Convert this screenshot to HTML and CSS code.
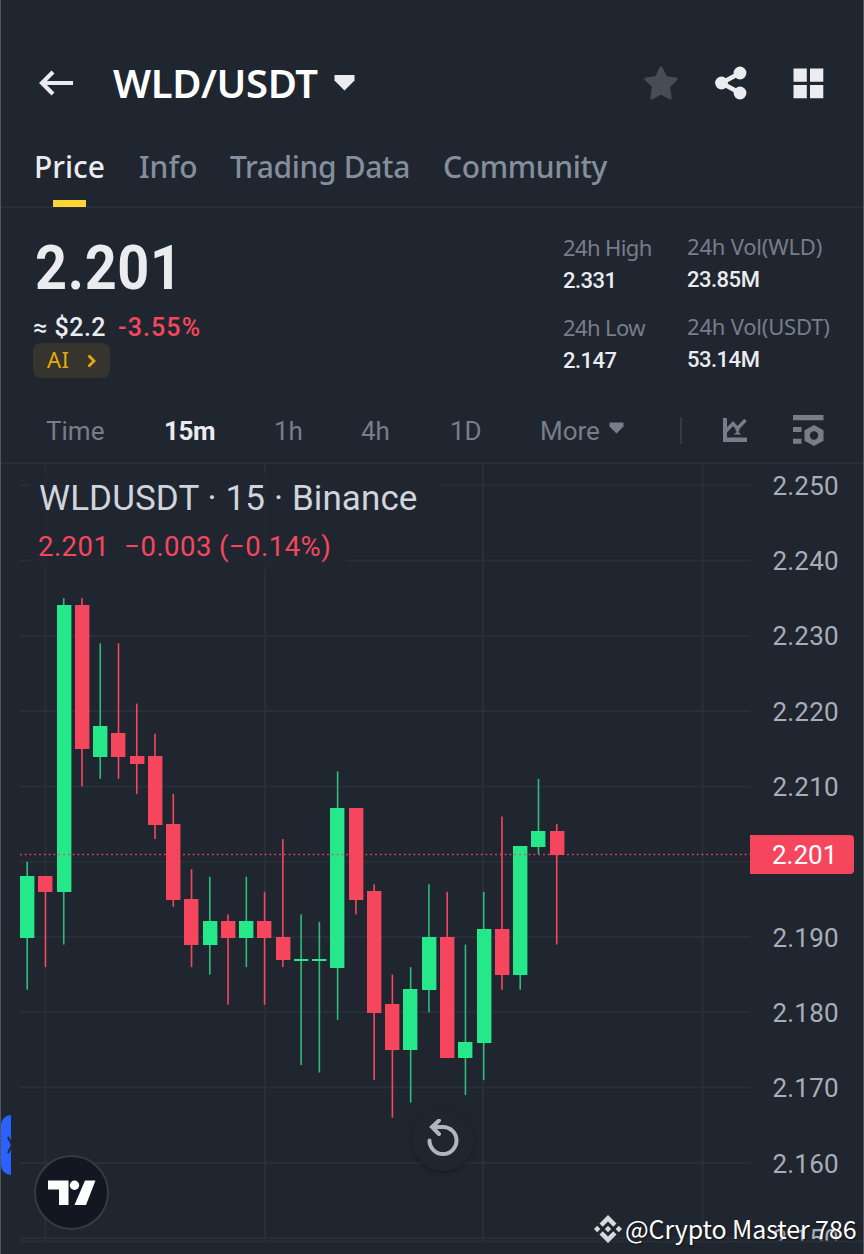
FILE: index.html
```html
<!DOCTYPE html>
<html lang="en">
<head>
    <meta charset="UTF-8">
    <meta name="viewport" content="width=device-width, initial-scale=1.0">
    <title>WLD/USDT</title>
    <link rel="stylesheet" href="styles.css">
</head>
<body>
<div class="screen">
    <header class="header">
        <svg class="back" width="36" height="28" viewBox="0 0 36 28"><path d="M35 14H4M15 3L4 14l11 11" fill="none" stroke="#eaecef" stroke-width="4.2"/></svg>
        <h1><span>WLD/USDT</span></h1>
        <svg class="caret" width="21" height="16" viewBox="0 0 21 16"><path d="M.5 0h20v5.500L10.500 15.500.5 5.500z" fill="#eaecef"/></svg>
        <div class="actions">
            <svg width="34" height="34" viewBox="0 0 34 34"><path d="M17 2l4.600 9.500 10.400 1.500-7.500 7.400 1.700 11.600L17 27l-9.200 5 1.700-11.600L2 13l10.400-1.500z" fill="#474d57" stroke="#474d57" stroke-width="3" stroke-linejoin="round"/></svg>
            <svg width="32" height="34" viewBox="0 0 32 34"><path d="M25 7L6.500 17 25 27" fill="none" stroke="#eaecef" stroke-width="4.500"/><g fill="#eaecef"><circle cx="6.500" cy="17" r="6.400"/><circle cx="25" cy="7" r="6.400"/><circle cx="25" cy="27" r="6.400"/></g></svg>
            <svg width="31" height="31" viewBox="0 0 31 31"><path d="M.5.5h13.300v13.300H.5zM17 .5h13.300v13.300H17zM.5 17h13.300v13.300H.5zM17 17h13.300v13.300H17z" fill="#eaecef"/></svg>
        </div>
    </header>

    <nav class="tabs">
        <a class="active">Price</a>
        <a>Info</a>
        <a class="tight">Trading Data</a>
        <a class="tight">Community</a>
    </nav>

    <section class="summary">
        <div class="price">
            <div class="last"><span>2.201</span></div>
            <div class="fiat"><span class="usd">≈ $2.2</span><span class="down">-3.55%</span></div>
            <div class="ai"><span>AI</span><svg width="9" height="14" viewBox="0 0 9 14"><path d="M1.500 1.500L7 7l-5.500 5.500" fill="none" stroke="#e0aa12" stroke-width="2.800"/></svg></div>
        </div>
        <dl class="stats">
            <div><dt class="tight">24h High</dt><dd>2.331</dd></div>
            <div class="vol"><dt>24h Vol(WLD)</dt><dd>23.85M</dd></div>
            <div><dt class="tight">24h Low</dt><dd>2.147</dd></div>
            <div class="vol"><dt>24h Vol(USDT)</dt><dd>53.14M</dd></div>
        </dl>
    </section>

    <nav class="intervals">
        <a>Time</a>
        <a class="active">15m</a>
        <a>1h</a>
        <a>4h</a>
        <a>1D</a>
        <a class="more">More <svg width="15" height="12" viewBox="0 0 15 12"><path d="M.5.500h14v4L7.500 11.500.5 4.500z" fill="#777d89"/></svg></a>
        <i class="divider"></i>
        <svg width="25" height="25" viewBox="0 0 25 25"><path d="M0 0h4v19.500h20V24H0z" fill="#777d89"/><path d="M3 13l7-7.500 4.500 5L22.500 2" fill="none" stroke="#777d89" stroke-width="3.400"/><path d="M12 11.500h5l-1.700 2.500 3 2.500h-7.600l3-2.500z" fill="#777d89"/></svg>
        <svg width="31" height="32" viewBox="0 0 31 32"><path d="M0 0h30.500v5.300H0zM0 12h8.500v5H0zM0 23.700h8.500v5H0z" fill="#777d89"/><path fill-rule="evenodd" d="M21 10l9.500 5.300v10.400L21 31l-9.500-5.300V15.300zM21 16.300a4.200 4.200 0 100 8.400 4.200 4.200 0 000-8.400z" fill="#777d89"/></svg>
    </nav>

    <main class="chart">
        <svg id="plot" width="862" height="790" viewBox="1 464 862 790"></svg>
        <div class="legend">
            <div class="symbol"><span>WLDUSDT · 15 · Binance</span></div>
            <div class="change"><span>2.201</span><span>−0.003 (−0.14%)</span></div>
        </div>
        <div class="price-tag">2.201</div>
        <div class="drawer"><svg width="5" height="18" viewBox="0 0 5 18"><path d="M1 1l4 8-4 8" fill="none" stroke="#202630" stroke-width="2"/></svg></div>
        <div class="tv-logo">
            <svg width="48" height="26" viewBox="0 0 48 26"><path d="M0 .5h20.500V25h-9.500V9.500H0zM37 .5h10.500L38 25H26.500z" fill="#fff"/><circle cx="26.500" cy="5.200" r="4.700" fill="#fff"/></svg>
        </div>
        <button class="reset"><svg width="36" height="40" viewBox="0 0 36 40"><path d="M4.500 21.500A13.500 13.500 0 1018 8H7M14 1.500L7 8l7 7" fill="none" stroke="#b2b5be" stroke-width="4" stroke-linecap="round"/></svg></button>
        <div class="watermark">
            <svg width="28" height="28" viewBox="0 0 28 28" fill="#d8d9db"><path d="M14 0l8.500 8.500-3.200 3.200L14 6.400l-5.300 5.300-3.200-3.200zM14 28l-8.500-8.500 3.200-3.200 5.300 5.300 5.300-5.300 3.200 3.200zM14 10.800l3.200 3.200-3.200 3.200-3.200-3.200zM3.200 10.800L6.400 14l-3.200 3.200L0 14zM24.800 10.800L28 14l-3.200 3.200-3.200-3.200z"/></svg>
            <span>@Crypto Master 786</span>
        </div>
    </main>
</div>
<script src="chart.js"></script>
</body>
</html>
```
FILE: styles.css
```css
* {
    box-sizing: border-box;
}

body {
    margin: 0;
    background: #202630;
    color: #eaecef;
    font-family: "Noto Sans", sans-serif;
}

svg {
    display: block;
}

.screen {
    width: 864px;
    height: 1254px;
    overflow: hidden;
    padding-top: 49px;
    border-left: 1px solid #50555e;
    border-right: 1px solid #50555e;
}

/* Header */
.header {
    display: flex;
    align-items: center;
    height: 68px;
    padding: 0 39px 0 37px;
}

.header h1 {
    width: 206px;
    margin: 0 15px 0 39px;
    color: #fff;
    font-size: 40px;
    font-weight: 600;
    letter-spacing: -.4px;
    line-height: 68px;
    white-space: nowrap;
}

.actions {
    display: flex;
    align-items: center;
    margin-left: auto;
}

.actions svg:nth-child(2) {
    margin: 0 46px 0 37px;
}

/* Tabs */
.tabs {
    display: grid;
    grid-template-columns: 105px 91px 213px 1fr;
    height: 91px;
    padding: 20px 0 0 33px;
    border-bottom: 2px solid #282d37;
    color: #848e9c;
    font-size: 30px;
    font-weight: 500;
    line-height: 60px;
}

.tabs .tight {
    letter-spacing: -.35px;
}

.tabs .active {
    position: relative;
    color: #eaecef;
}

.tabs .active::after {
    content: "";
    position: absolute;
    left: 19px;
    top: 63px;
    width: 33px;
    height: 7px;
    background: #fcd535;
}

/* Price summary */
.summary {
    display: flex;
    justify-content: space-between;
    height: 189px;
    padding: 23px 0 0 32px;
}

.last {
    height: 74px;
    padding-left: 2px;
    font: 700 62px/73px Roboto, sans-serif;
}

.last span {
    display: inline-block;
    letter-spacing: .8px;
    transform: scaleX(.9);
    transform-origin: left;
}

.fiat {
    display: flex;
    gap: 12px;
    height: 38px;
    font: 500 25px/45px Roboto, sans-serif;
    letter-spacing: .5px;
}

.down {
    color: #f6465d;
    letter-spacing: 1.1px;
}

.ai {
    display: flex;
    align-items: center;
    justify-content: space-between;
    width: 77px;
    height: 35px;
    padding: 0 14px;
    border-radius: 8px;
    background: #37342d;
    color: #e0aa12;
    font-size: 22px;
    line-height: 30px;
}

.ai span {
    margin-top: -3px;
    letter-spacing: .5px;
}

.stats {
    display: grid;
    grid-template-columns: 124px 176px;
    grid-auto-rows: 80px;
    margin: 0;
}

.stats .vol {
    margin-top: -1px;
}

.stats dt {
    color: #777d89;
    font-size: 22px;
    letter-spacing: -.2px;
    line-height: 33px;
    white-space: nowrap;
}

.stats .tight {
    letter-spacing: -.6px;
}

.stats dd {
    margin: 0;
    font: 500 22px/33px Roboto, sans-serif;
    letter-spacing: -.5px;
}

/* Intervals */
.intervals {
    display: grid;
    grid-template-columns: 118px 110px 87px 89px 90px 140px 43px 70px 1fr;
    align-items: center;
    height: 67px;
    padding-left: 45px;
    border-bottom: 2px solid #282d37;
    color: #777d89;
    font: 400 26px/66px Roboto, sans-serif;
}

.intervals a {
    margin-top: 1px;
}

.intervals .active {
    color: #eaecef;
    font-weight: 700;
    letter-spacing: -.4px;
}

.intervals .more {
    display: flex;
    align-items: center;
    gap: 9px;
}

.more svg {
    margin-top: -6px;
}

.divider {
    width: 2px;
    height: 27px;
    background: #343a45;
}

/* Chart */
.chart {
    position: relative;
    height: 790px;
    font-family: Roboto, sans-serif;
}

.axis {
    fill: #a9adb8;
    font-size: 26px;
    letter-spacing: .2px;
}

.grid {
    stroke: #292e38;
    stroke-width: 2;
}

.up {
    fill: #25e88b;
}

.fall {
    fill: #f6465d;
}

.up .wick {
    fill: #2dbd7a;
}

.last-line {
    stroke: #f6465d;
    stroke-width: 1.6;
    stroke-dasharray: 1.6 3.2;
}

.legend {
    position: absolute;
    left: 29px;
    top: 8px;
    white-space: nowrap;
}

.symbol,
.change {
    width: max-content;
    background: rgba(32, 38, 48, .7);
}

.symbol {
    padding: 0 22px 0 9px;
    color: #d1d4dc;
    font-size: 35px;
    letter-spacing: .1px;
    line-height: 53px;
}

.change {
    display: flex;
    gap: 15px;
    padding: 0 16px 0 8px;
    color: #f6465d;
    font-size: 27.500px;
    letter-spacing: .45px;
    line-height: 43px;
    height: 45px;
}

.price-tag {
    position: absolute;
    left: 749px;
    top: 371px;
    width: 104px;
    height: 39px;
    padding-left: 22px;
    border-radius: 0 4px 4px 0;
    background: #f6465d;
    color: #fff;
    font-size: 26px;
    line-height: 40px;
}

.drawer {
    position: absolute;
    left: 0;
    top: 651px;
    width: 10px;
    height: 60px;
    padding: 21px 0 0 6px;
    border-radius: 10px 0 0 10px;
    background: #2962ff;
    overflow: hidden;
}

.tv-logo {
    position: absolute;
    left: 33px;
    top: 691px;
    display: flex;
    align-items: center;
    justify-content: center;
    width: 75px;
    height: 75px;
    border: 2px solid #363a45;
    border-radius: 50%;
    background: #131722;
}

.reset {
    position: absolute;
    left: 411px;
    top: 645px;
    display: flex;
    justify-content: center;
    width: 62px;
    height: 62px;
    padding: 10px 0 0;
    border: 0;
    border-radius: 50%;
    background: #202630;
    box-shadow: 0 2px 5px rgba(0, 0, 0, .3);
}

.watermark {
    position: absolute;
    left: 593px;
    top: 745px;
    display: flex;
    align-items: center;
    gap: 3px;
    height: 40px;
    color: #fff;
    font: 400 25px/38px "Noto Sans CJK SC", sans-serif;
    letter-spacing: -.1px;
    white-space: nowrap;
    text-shadow: 1px 1px 2px #111;
}

.watermark span {
    margin-top: -2px;
}
```
FILE: chart.js
```js
// [open, high, low, close] in thousandths
const candles = [
    [2190, 2200, 2183, 2198], [2198, 2198, 2186, 2196], [2196, 2235, 2189, 2234],
    [2234, 2235, 2210, 2215], [2214, 2229, 2211, 2218], [2217, 2229, 2211, 2214],
    [2214, 2221, 2209, 2213], [2214, 2217, 2203, 2205], [2205, 2209, 2194, 2195],
    [2195, 2199, 2186, 2189], [2189, 2198, 2185, 2192], [2192, 2193, 2181, 2190],
    [2190, 2198, 2186, 2192], [2192, 2196, 2181, 2190], [2190, 2203, 2186, 2187],
    [2187, 2193, 2173, 2187], [2187, 2192, 2172, 2187], [2186, 2212, 2179, 2207],
    [2207, 2207, 2193, 2195], [2196, 2197, 2171, 2180], [2181, 2185, 2166, 2175],
    [2175, 2186, 2168, 2183], [2183, 2197, 2180, 2190], [2190, 2196, 2174, 2174],
    [2174, 2189, 2169, 2176], [2176, 2196, 2171, 2191], [2191, 2206, 2183, 2185],
    [2185, 2202, 2183, 2202], [2202, 2211, 2201, 2204], [2204, 2205, 2189, 2201]
];

const y = p => 485.2 + (2250 - p) * 7.53;
let out = '<clipPath id="pane"><rect x="0" y="464" width="864" height="777"/></clipPath>';

// grid and price scale
for (const x of [45.5, 265, 483, 702.5]) {
    out += `<line class="grid" x1="${x}" x2="${x}" y1="464" y2="1241"/>`;
}
for (let p = 2250; p >= 2150; p -= 10) {
    out += `<line class="grid" x1="20" x2="750" y1="${y(p)}" y2="${y(p)}"/>`;
    if (p !== 2200) {
        out += `<text class="axis" x="772.5" y="${y(p) + 9.6}" clip-path="url(#pane)">${(p / 1000).toFixed(3)}</text>`;
    }
}
out += '<line class="grid" x1="20" x2="863" y1="1241.5" y2="1241.5"/>';

candles.forEach(([o, h, l, c], i) => {
    const x = 27.2 + i * 18.26;
    const top = Math.round(y(Math.max(o, c)) - 0.5);
    const bottom = Math.round(y(Math.min(o, c)) + 0.5);
    out += `<g class="${c >= o ? 'up' : 'fall'}">
        <rect class="wick" x="${x - 0.8}" y="${y(h)}" width="1.6" height="${y(l) - y(h)}"/>
        <rect x="${Math.round(x - 7.2)}" y="${top}" width="14.4" height="${Math.max(bottom - top, 2)}"/>
    </g>`;
});

out += '<line class="last-line" x1="20" x2="750" y1="854.5" y2="854.5"/>';
document.getElementById('plot').innerHTML = out;
```
